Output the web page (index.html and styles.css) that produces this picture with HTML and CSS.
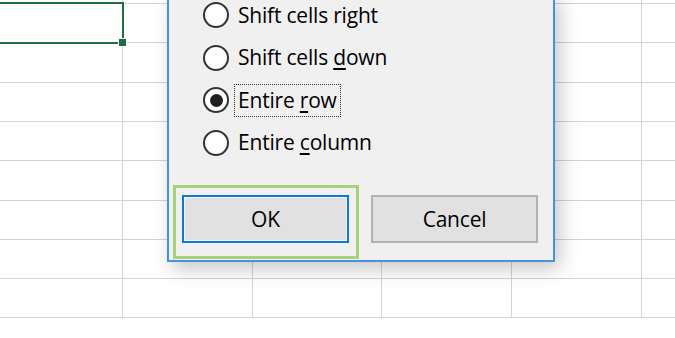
FILE: index.html
```html
<!DOCTYPE html>
<html>
<head>
    <meta charset="utf-8">
    <title>Delete dialog</title>
    <link rel="stylesheet" href="styles.css">
</head>
<body>
    <div class="sheet">
        <div class="row">
            <div class="cell"></div><div class="cell"></div><div class="cell"></div><div class="cell"></div><div class="cell"></div><div class="cell"></div>
        </div>
        <div class="row">
            <div class="cell selected"><span class="handle"></span></div><div class="cell"></div><div class="cell"></div><div class="cell"></div><div class="cell"></div><div class="cell"></div>
        </div>
        <div class="row tall">
            <div class="cell"></div><div class="cell"></div><div class="cell"></div><div class="cell"></div><div class="cell"></div><div class="cell"></div>
        </div>
        <div class="row">
            <div class="cell"></div><div class="cell"></div><div class="cell"></div><div class="cell"></div><div class="cell"></div><div class="cell"></div>
        </div>
        <div class="row">
            <div class="cell"></div><div class="cell"></div><div class="cell"></div><div class="cell"></div><div class="cell"></div><div class="cell"></div>
        </div>
        <div class="row tall">
            <div class="cell"></div><div class="cell"></div><div class="cell"></div><div class="cell"></div><div class="cell"></div><div class="cell"></div>
        </div>
        <div class="row">
            <div class="cell"></div><div class="cell"></div><div class="cell"></div><div class="cell"></div><div class="cell"></div><div class="cell"></div>
        </div>
        <div class="row">
            <div class="cell"></div><div class="cell"></div><div class="cell"></div><div class="cell"></div><div class="cell"></div><div class="cell"></div>
        </div>
        <div class="row">
            <div class="cell"></div><div class="cell"></div><div class="cell"></div><div class="cell"></div><div class="cell"></div><div class="cell"></div>
        </div>
    </div>

    <div class="dialog">
        <div class="options">
            <div class="option"><span class="radio"></span><span class="label">Shift cells ri<u>g</u>ht</span></div>
            <div class="option"><span class="radio"></span><span class="label">Shift cells <u>d</u>own</span></div>
            <div class="option"><span class="radio checked"></span><span class="label focused">Entire <u>r</u>ow</span></div>
            <div class="option"><span class="radio"></span><span class="label">Entire <u>c</u>olumn</span></div>
        </div>
        <div class="buttons">
            <div class="button default">OK</div>
            <div class="button">Cancel</div>
        </div>
        <!-- highlight drawn over the OK button -->
        <div class="highlight"></div>
    </div>
</body>
</html>
```

FILE: styles.css
```css
html, body {
    margin: 0;
    height: 100%;
    overflow: hidden;
    background: #fff;
}
body {
    position: relative;
    font-family: 'Open Sans', 'Noto Sans', sans-serif;
}

/* spreadsheet grid */
.sheet {
    margin-top: -36px;
    display: flex;
    flex-direction: column;
}
.row {
    display: flex;
    height: 39px;
}
.row:first-child,
.row.tall {
    height: 40px;
}
.cell {
    flex: none;
    box-sizing: border-box;
    width: 130px;
    border-right: 1px solid #d4d4d4;
    border-bottom: 1px solid #d4d4d4;
    position: relative;
}
.cell:first-child { width: 123px; }
.cell:nth-child(3) { width: 129px; }
.cell:last-child { flex: 1; border-right: none; }

.cell.selected::before {
    content: '';
    position: absolute;
    left: -10px;
    top: -2px;
    right: -2px;
    bottom: -2px;
    border: 2px solid #1e6e41;
    border-left: none;
}
.handle {
    position: absolute;
    right: -5px;
    bottom: -5px;
    width: 7px;
    height: 7px;
    background: #1e6e41;
    border: 1px solid #fff;
    z-index: 1;
}

/* dialog */
.dialog {
    position: absolute;
    left: 167px;
    top: -8px;
    width: 388px;
    box-sizing: border-box;
    background: #f0f0f0;
    border: 2px solid #4593de;
    box-shadow: 5px 7px 18px rgba(0, 0, 0, 0.22);
    font-size: 21px;
    letter-spacing: -0.2px;
    color: #000;
}
.options {
    padding-left: 34px;
}
.option {
    height: 42.5px;
    display: flex;
    align-items: center;
}
.radio {
    flex: none;
    box-sizing: border-box;
    width: 26px;
    height: 26px;
    border: 2px solid #333;
    border-radius: 50%;
    background: #fff;
    display: flex;
    align-items: center;
    justify-content: center;
}
.radio.checked::after {
    content: '';
    width: 13px;
    height: 13px;
    border-radius: 50%;
    background: #1f1f1f;
}
.label {
    margin-left: 5px;
    padding: 3px 3px 4px;
    border: 1px dotted transparent;
    line-height: 24px;
}
.label.focused {
    border-color: #333;
}
.label u {
    text-underline-offset: 3px;
}

.buttons {
    display: flex;
    gap: 22px;
    padding: 31px 15px 17px 13px;
}
.button {
    flex: 1;
    box-sizing: border-box;
    height: 48px;
    display: flex;
    align-items: center;
    justify-content: center;
    background: #e1e1e1;
    border: 2px solid #b2b2b2;
}
.button.default {
    border-color: #0f78d7;
    box-shadow: inset 0 0 0 1px #f4f4f4;
}

.highlight {
    position: absolute;
    left: 4px;
    top: 191px;
    width: 186px;
    height: 74px;
    box-sizing: border-box;
    border: 3px solid #a8d17a;
}
```
